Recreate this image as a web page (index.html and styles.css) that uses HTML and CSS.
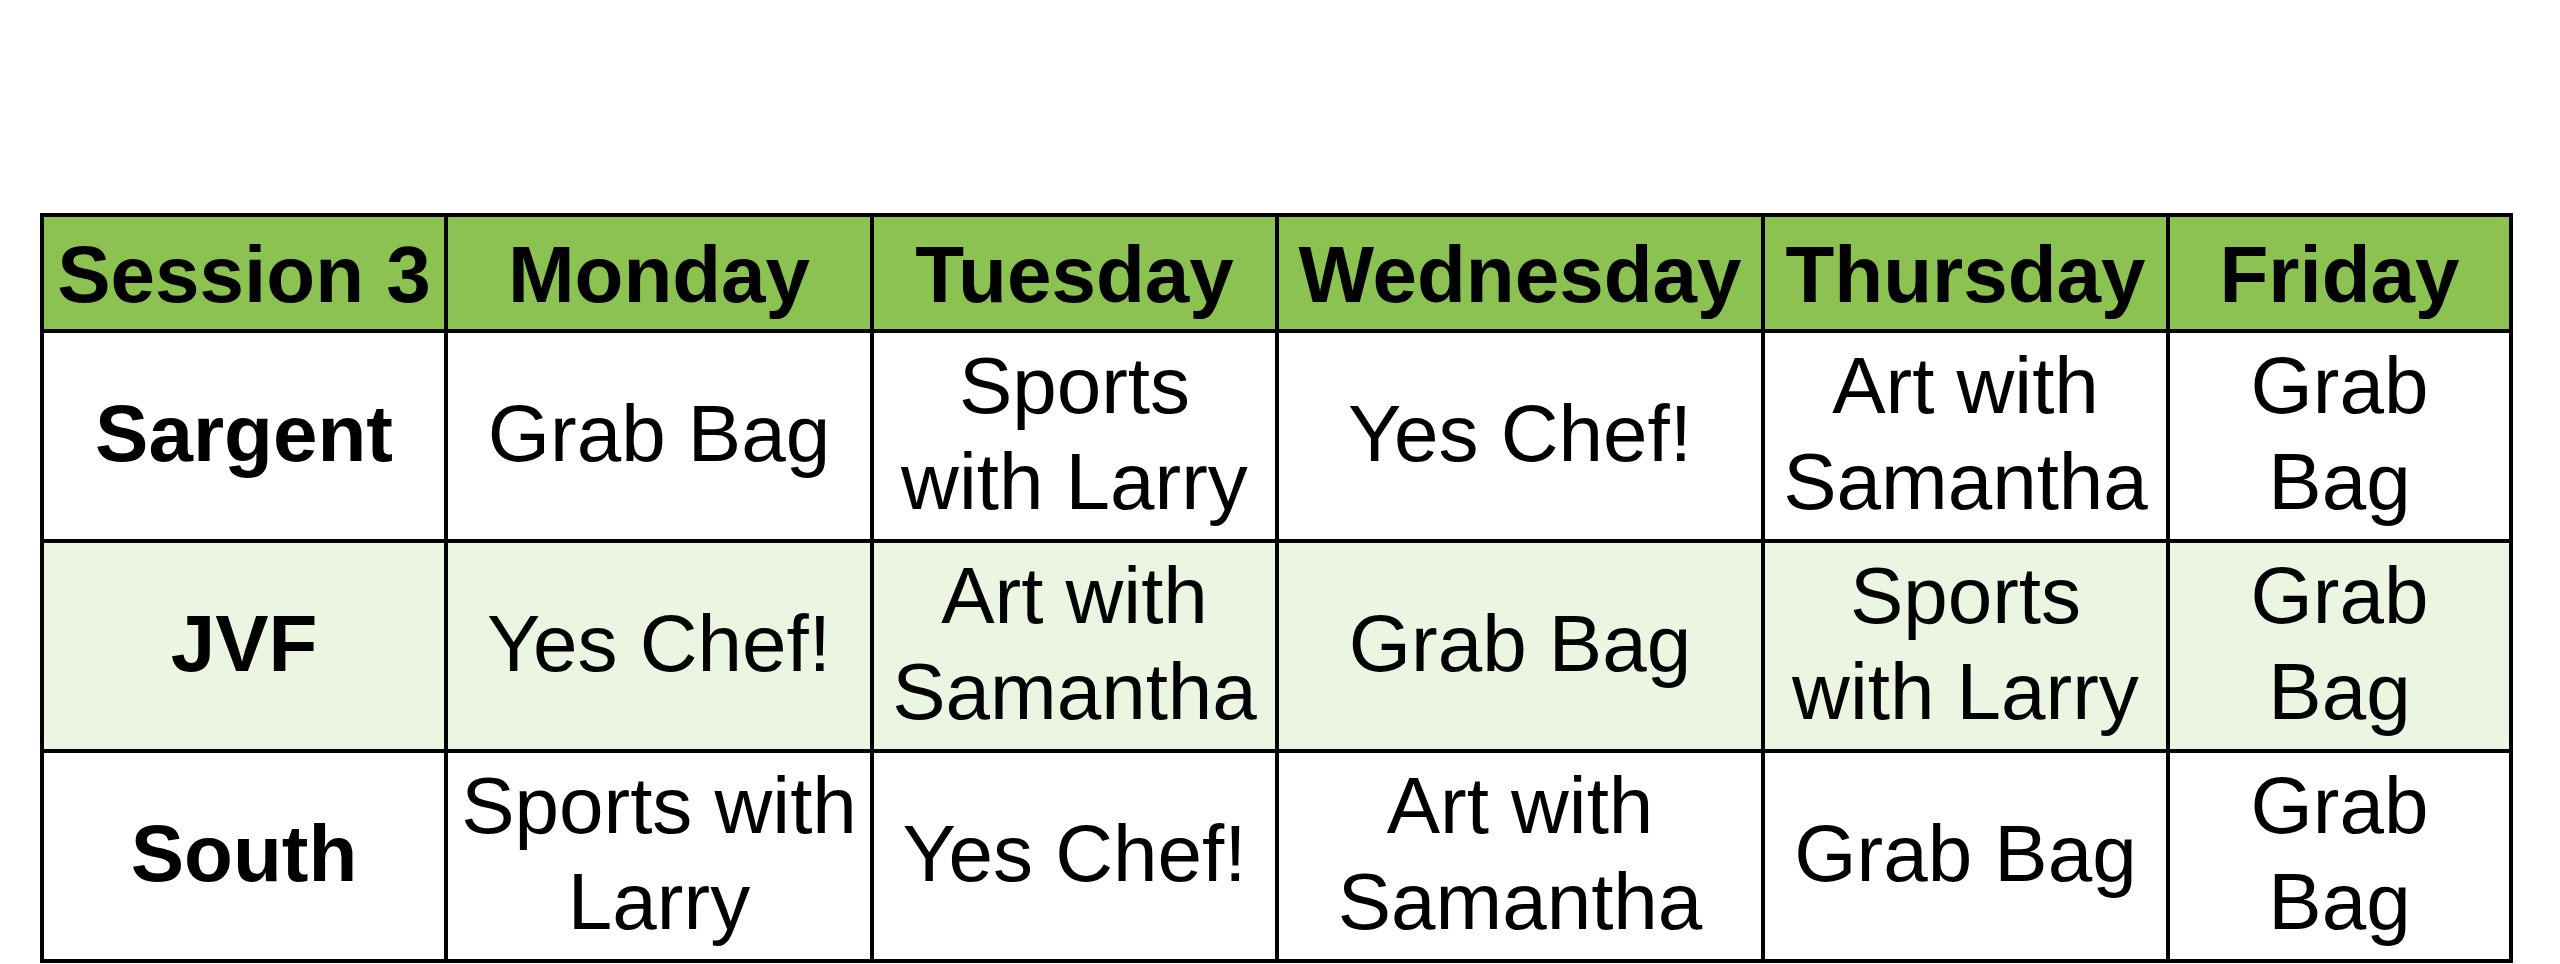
FILE: index.html
```html
<!DOCTYPE html>
<html lang="en">
<head>
<meta charset="utf-8">
<title>Session 3 Schedule</title>
<link rel="stylesheet" href="styles.css">
</head>
<body>
<div class="schedule" role="table">
  <div class="cell head" role="columnheader">Session 3</div>
  <div class="cell head" role="columnheader">Monday</div>
  <div class="cell head" role="columnheader">Tuesday</div>
  <div class="cell head" role="columnheader">Wednesday</div>
  <div class="cell head" role="columnheader">Thursday</div>
  <div class="cell head" role="columnheader">Friday</div>

  <div class="cell site" role="rowheader">Sargent</div>
  <div class="cell">Grab Bag</div>
  <div class="cell">Sports<br>with Larry</div>
  <div class="cell">Yes Chef!</div>
  <div class="cell">Art with<br>Samantha</div>
  <div class="cell">Grab<br>Bag</div>

  <div class="cell site alt" role="rowheader">JVF</div>
  <div class="cell alt">Yes Chef!</div>
  <div class="cell alt">Art with<br>Samantha</div>
  <div class="cell alt">Grab Bag</div>
  <div class="cell alt">Sports<br>with Larry</div>
  <div class="cell alt">Grab<br>Bag</div>

  <div class="cell site" role="rowheader">South</div>
  <div class="cell">Sports with<br>Larry</div>
  <div class="cell">Yes Chef!</div>
  <div class="cell">Art with<br>Samantha</div>
  <div class="cell">Grab Bag</div>
  <div class="cell">Grab<br>Bag</div>
</div>
</body>
</html>
```
FILE: styles.css
```css
html, body {
  margin: 0;
  background: #ffffff;
}

body {
  padding: 213px 0 0 40px;
  overflow: hidden;
  font-family: "Liberation Sans", Arial, sans-serif;
  color: #000000;
}

.schedule {
  display: grid;
  width: max-content;
  grid-template-columns: 400px 422px 401px 482px 401px 339px;
  grid-template-rows: 112px 206px 206px 206px;
  gap: 4px;
  padding: 4px;
  background: #000000;
}

.cell {
  display: flex;
  align-items: center;
  justify-content: center;
  text-align: center;
  background: #ffffff;
  font-size: 80px;
  line-height: 96px;
  white-space: nowrap;
  padding-bottom: 4px;
}

.head {
  background: #8cc251;
  font-weight: bold;
  padding-bottom: 0;
  padding-top: 4px;
}

.site {
  font-weight: bold;
}

.alt {
  background: #ebf5e2;
}
```
